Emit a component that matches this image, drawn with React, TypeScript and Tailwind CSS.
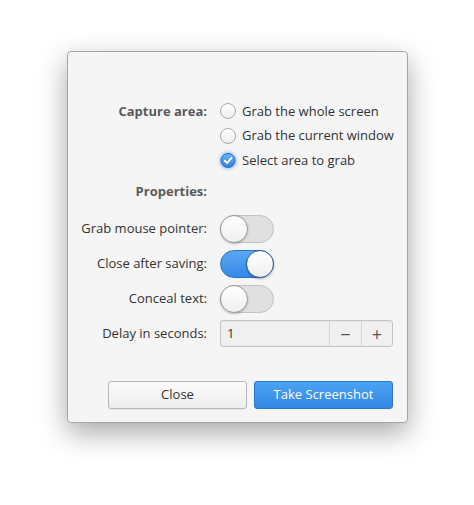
import { useState } from "react";

const font = { fontFamily: '"Open Sans", "Noto Sans", sans-serif' };

function Radio({ checked }: { checked?: boolean }) {
  if (checked) {
    return (
      <svg width="17" height="17" viewBox="0 0 17 17" className="drop-shadow-[0_0_2px_rgba(54,137,230,0.8)]">
        <defs>
          <linearGradient id="rb" x1="0" y1="0" x2="0" y2="1">
            <stop offset="0" stopColor="#6fb3f5" />
            <stop offset="1" stopColor="#2f7fdc" />
          </linearGradient>
        </defs>
        <circle cx="8.5" cy="8.5" r="7.5" fill="url(#rb)" stroke="#2a6fc2" strokeWidth="1" />
        <path d="M5 8.8 L7.6 11.3 L12.2 5.8" fill="none" stroke="#fff" strokeWidth="2" strokeLinecap="round" strokeLinejoin="round" />
      </svg>
    );
  }
  return <span className="block h-[16px] w-[16px] rounded-full border border-[#a9a9a9] bg-gradient-to-b from-[#ffffff] to-[#ececec]" />;
}

function Switch({ on }: { on?: boolean }) {
  return (
    <span
      className={
        on
          ? "flex h-7 w-[54px] items-center justify-end rounded-full border border-[#2f74c4] bg-gradient-to-b from-[#5aa8f3] to-[#3389e6]"
          : "flex h-7 w-[54px] items-center justify-start rounded-full border border-[#c2c2c2] bg-[#e0e0e0]"
      }
    >
      <span
        className={
          on
            ? "-mr-px h-7 w-7 rounded-full border border-[#2a5f9e] bg-gradient-to-b from-[#ffffff] to-[#efefef] shadow-[0_1px_2px_rgba(0,0,0,0.3)]"
            : "-ml-px h-7 w-7 rounded-full border border-[#9a9a9a] bg-gradient-to-b from-[#ffffff] to-[#efefef] shadow-[0_1px_2px_rgba(0,0,0,0.25)]"
        }
      />
    </span>
  );
}

function Row({ label, bold, h, children, className }: { label: string; bold?: boolean; h: string; children?: React.ReactNode; className?: string }) {
  return (
    <div className={`flex items-center gap-[13px] whitespace-nowrap ${h} ${className ?? ""}`}>
      <div className={bold ? "w-[126px] flex-none text-right font-bold text-[#5a5a5a]" : "w-[126px] flex-none text-right text-[#333]"}>{label}</div>
      <div className="flex items-center gap-[6px] text-[#333]">{children}</div>
    </div>
  );
}

export default function App() {
  const [delay] = useState("1");
  return (
    <div className="min-h-[505px] w-[474px] bg-white pl-[67px] pt-[51px] text-[13px]" style={font}>
      <div className="flex h-[372px] w-[341px] flex-col rounded-[4px] border border-[#a5a5a5] bg-[#f5f5f5] pl-[13px] pr-[14px] pt-[47px] pb-[13px] shadow-[0_10px_28px_rgba(0,0,0,0.35)]">
        <Row label="Capture area:" bold h="h-[24.5px]">
          <span className="flex w-[16px] justify-center"><Radio /></span>
          <span>Grab the whole screen</span>
        </Row>
        <Row label="" h="h-[24.5px]">
          <span className="flex w-[16px] justify-center"><Radio /></span>
          <span>Grab the current window</span>
        </Row>
        <Row label="" h="h-[24.5px]">
          <span className="flex w-[16px] justify-center"><Radio checked /></span>
          <span>Select area to grab</span>
        </Row>
        <Row label="Properties:" bold h="h-6" className="mt-[7.5px]" />
        <Row label="Grab mouse pointer:" h="h-7" className="mt-[11px]">
          <Switch />
        </Row>
        <Row label="Close after saving:" h="h-7" className="mt-[7px]">
          <Switch on />
        </Row>
        <Row label="Conceal text:" h="h-7" className="mt-[7px]">
          <Switch />
        </Row>
        <Row label="Delay in seconds:" h="h-[27px]" className="mt-[7px]">
          <div className="flex h-[27px] w-[173px] overflow-hidden rounded-[3px] border border-[#c4c4c4] bg-[#f0f0f0] shadow-[inset_0_1px_1px_rgba(0,0,0,0.05)]">
            <div className="flex flex-1 items-center pl-[6px] text-[#333]">{delay}</div>
            <div className="flex w-[32px] items-center justify-center border-l border-[#d6d6d6] text-[18px] leading-none text-[#555]">−</div>
            <div className="flex w-[31px] items-center justify-center border-l border-[#d6d6d6] text-[18px] leading-none text-[#555]">+</div>
          </div>
        </Row>
        <div className="mt-auto flex justify-end gap-[7px]">
          <button className="h-7 w-[139px] rounded-[3px] border border-[#b9b9b9] bg-gradient-to-b from-[#fbfbfb] to-[#ededed] text-[#333] shadow-[0_1px_1px_rgba(0,0,0,0.06)]">
            Close
          </button>
          <button className="h-7 w-[139px] rounded-[3px] border border-[#2b76cf] bg-gradient-to-b from-[#4ba2f1] to-[#3388e5] text-white">
            Take Screenshot
          </button>
        </div>
      </div>
    </div>
  );
}
